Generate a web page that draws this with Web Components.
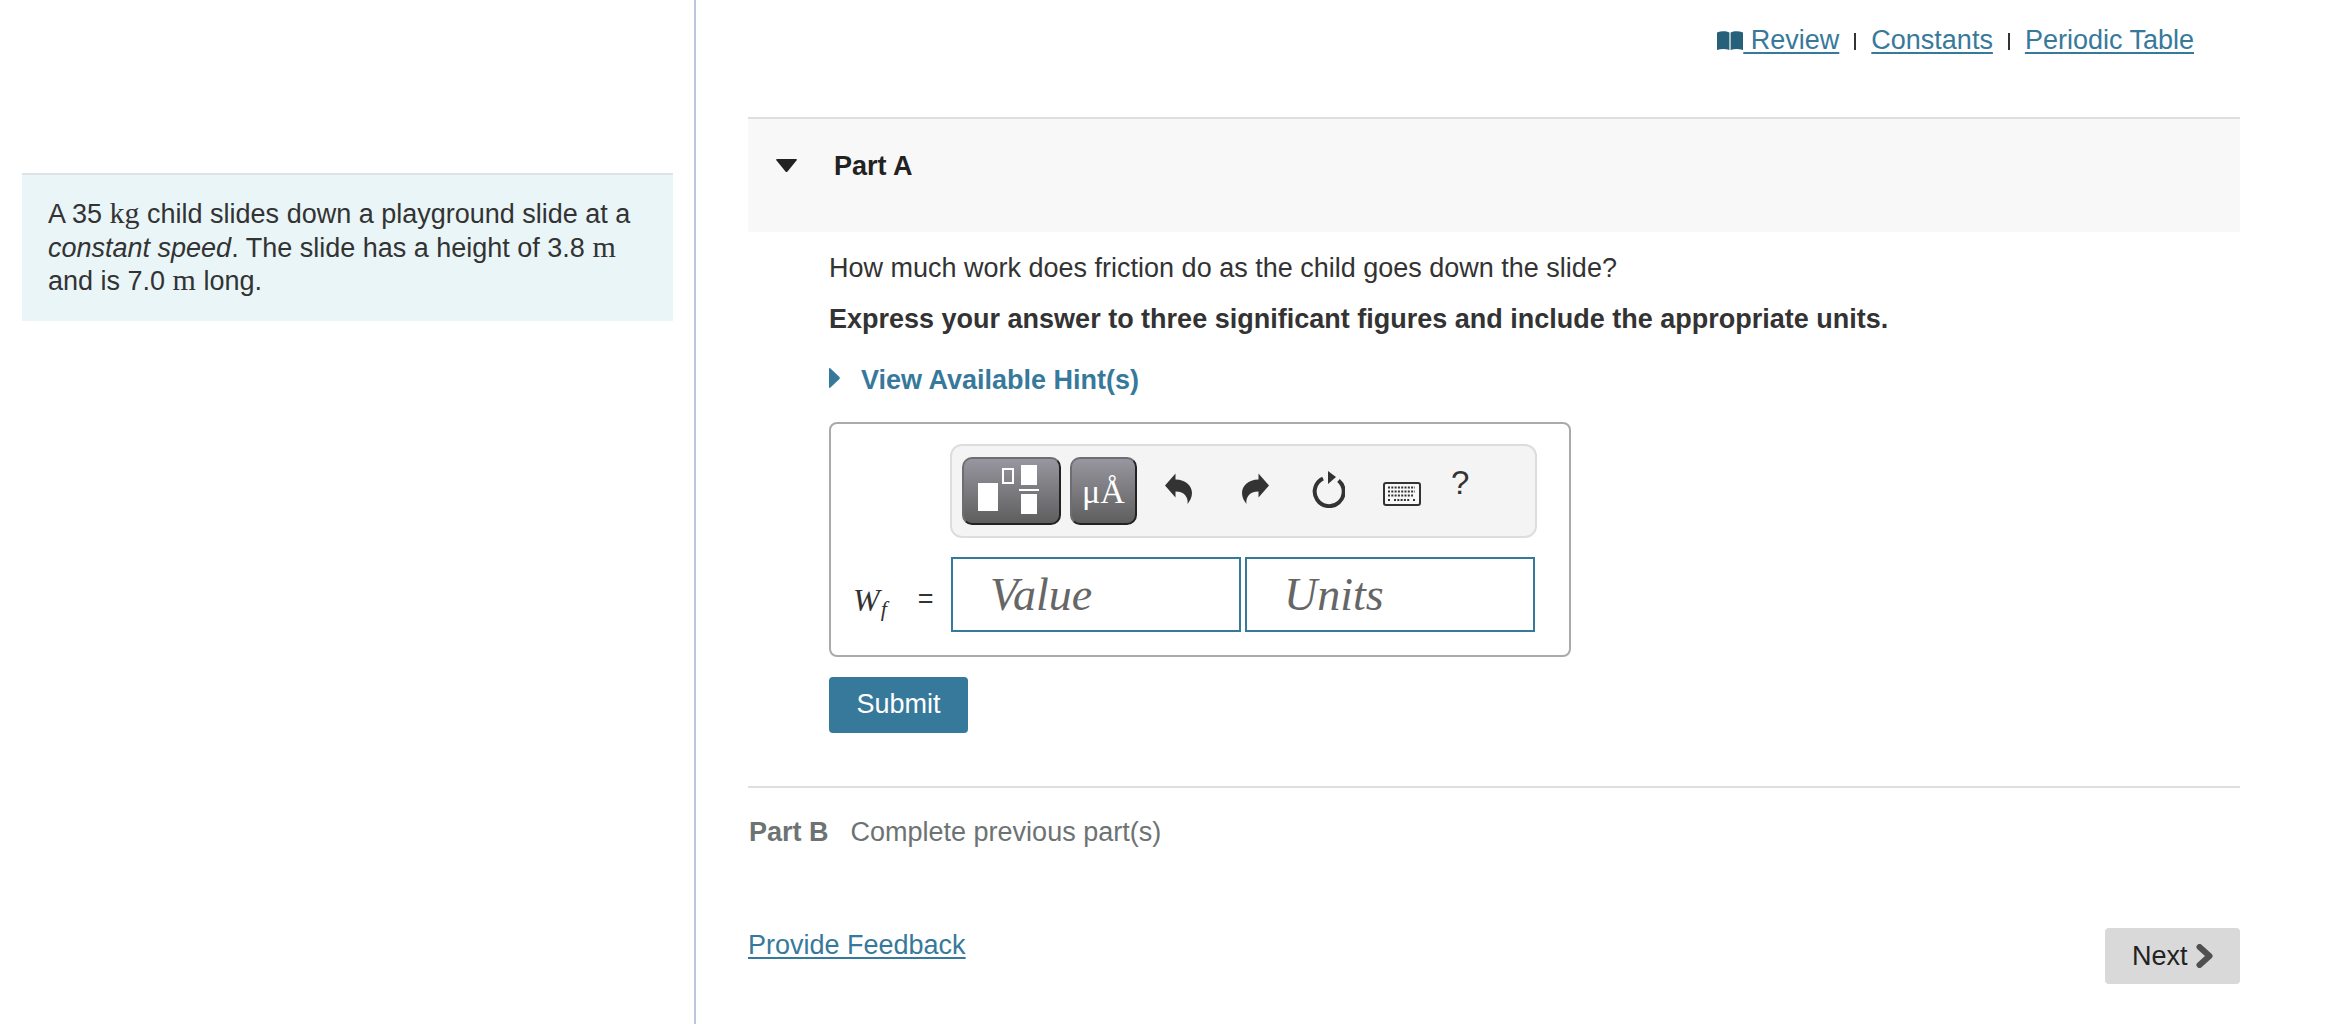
<!DOCTYPE html>
<html lang="en"><head><meta charset="utf-8"><title>Part A</title>
<style>
html,body{margin:0;padding:0;background:#fff}
body{font:27px/33px "Liberation Sans",Arial,sans-serif;color:#333;overflow:hidden}
</style></head><body>
<mp-app>
  <mp-context slot="left">A 35 <mp-math>kg</mp-math> child slides down a playground slide at a <em>constant speed</em>. The slide has a height of 3.8 <mp-math>m</mp-math> and is 7.0 <mp-math>m</mp-math> long.</mp-context>
  <mp-links slot="right"></mp-links>
  <mp-part-open slot="right" title-text="Part A">
    <p style="margin:0">How much work does friction do as the child goes down the slide?</p>
    <p style="margin:18px 0 0;font-weight:700">Express your answer to three significant figures and include the appropriate units.</p>
    <mp-hint></mp-hint>
    <mp-answer></mp-answer>
    <mp-button>Submit</mp-button>
  </mp-part-open>
  <mp-part-locked slot="right"></mp-part-locked>
  <mp-footer slot="right"></mp-footer>
</mp-app>
<script>
const def=(name,html,init)=>customElements.define(name,class extends HTMLElement{
  constructor(){super();this.attachShadow({mode:'open'}).innerHTML=html;}
  connectedCallback(){if(init)init(this)}
});
def('mp-app',`<style>
:host{display:flex;width:2332px;height:1024px;box-sizing:border-box}
.l{width:696px;height:100%;box-sizing:border-box;border-right:2px solid #b9c7de;padding:173px 24px 0 22px;flex:none}
.r{flex:1;min-width:0;padding:0 92px 0 52px}
</style><div class="l"><slot name="left"></slot></div><div class="r"><slot name="right"></slot></div>`);
def('mp-context',`<style>
:host{display:block;background:#e9f5f7;border-top:2px solid #dfe3e5;padding:22px 26px 0;height:148px;box-sizing:border-box;color:#333;width:651px;line-height:32.5px}
::slotted(em){font-style:italic}
</style><slot></slot>`);
def('mp-math',`<style>:host{font-family:"Liberation Serif","Times New Roman",serif;font-size:30px;color:#333}</style><slot></slot>`);
def('mp-links',`<style>
:host{display:flex;justify-content:flex-end;align-items:flex-start;height:117px;padding:24px 46px 0 0;box-sizing:border-box;color:#333}
a{color:#37799b;text-decoration:underline;text-underline-offset:3px;text-decoration-thickness:2px}
svg{display:block;margin:7px 0 0}
.s{margin:0 15px}
.sep{width:2px;height:17px;background:#333;margin:9px 15px 0}
</style>
<svg width="26" height="19" viewBox="0 0 26 19"><path d="M0 1.5C4-.3 9-.3 12.4 1.5V19C9 17.6 4 17.6 0 19Z M13.6 1.5C17-.3 22-.3 26 1.5V19C22 17.6 17 17.6 13.6 19Z" fill="#27607a"/></svg>
<a href="#">&nbsp;Review</a><span class="sep"></span><a href="#">Constants</a><span class="sep"></span><a href="#">Periodic Table</a>`);
def('mp-part-open',`<style>
:host{display:block}
.bar{background:#f8f8f8;border-top:2px solid #dedede;height:115px;box-sizing:border-box;padding:31px 0 0 28px;display:flex;align-items:flex-start;font-weight:700;color:#222}
svg{display:block;margin:9px 37px 0 0;flex:none}
.body{padding:20px 0 0 81px}
</style>
<div class="bar"><svg width="21" height="13" viewBox="0 0 21 13"><path d="M.5 0H20.5Q21 .5 20.5 1.5L11.5 12.5Q10.5 13.5 9.500 12.500L.5 1.500Q0 .5.5 0Z" fill="#222"/></svg><span id="t"></span></div>
<div class="body"><slot></slot></div>`,el=>{el.shadowRoot.getElementById('t').textContent=el.getAttribute('title-text')});
def('mp-hint',`<style>
:host{display:flex;align-items:flex-start;margin-top:28px;color:#37799b;font-weight:700}
svg{display:block;margin:4px 21px 0 0;flex:none}
</style><svg width="11" height="20" viewBox="0 0 11 20"><path d="M0 1Q0-.5 1.500.5L10.500 9Q11 10 10.500 11L1.500 19.500Q0 20.500 0 19Z" fill="#37799b"/></svg><span>View Available Hint(s)</span>`);
def('mp-answer',`<style>
:host{display:block;box-sizing:border-box;width:742px;height:235px;margin-top:25px;border:2px solid #aaa;border-radius:8px;padding:20px 0 0 119px;position:relative}
.row{display:flex;margin:19px 0 0 -119px;height:75px}
.lab{width:120px;box-sizing:border-box;padding:27px 0 0 22px;font:italic 32px/33px "Liberation Serif","Times New Roman",serif;color:#333;display:flex;flex:none}
.lab sub{font-size:22px;line-height:22px;margin:14px 0 0 1px;display:block}
.eq{font:27px/33px "Liberation Sans",Arial,sans-serif;margin:-1px 0 0 31px;font-style:normal}
.f{box-sizing:border-box;width:290px;height:75px;border:2px solid #37799b;font:italic 46px/71px "Liberation Serif","Times New Roman",serif;color:#666;padding-left:37px;flex:none}
.f+.f{margin-left:4px}
</style>
<mp-toolbar></mp-toolbar>
<div class="row"><div class="lab"><span>W</span><sub>f</sub><span class="eq">=</span></div><div class="f">Value</div><div class="f">Units</div></div>`);
def('mp-toolbar',`<style>
:host{display:flex;box-sizing:border-box;width:587px;height:94px;background:#f4f4f4;border:2px solid #ddd;border-radius:12px;padding:11px 0 0 10px;align-items:flex-start;color:#333}
.b{box-sizing:border-box;height:68px;border-radius:10px;border:2px solid #6e6e72;border-right-color:#222;border-bottom-color:#222;background:linear-gradient(#98969f,#5e5e5e);flex:none}
.t{width:99px;padding:0}
.t svg{display:block}
.m{width:67px;margin-left:9px;color:#fff;font:34px/62px "Liberation Serif","Times New Roman",serif;text-align:center;padding-top:2px}
svg.i{display:block;flex:none}
.q{font:33px/40px "Liberation Sans",Arial,sans-serif;margin:6px 0 0 30px;color:#333}
</style>
<div class="b t"><svg width="95" height="64" viewBox="0 0 95 64"><rect x="14" y="24" width="20" height="28" fill="#fff"/><rect x="39" y="10" width="10" height="14" fill="none" stroke="#fff" stroke-width="2"/><rect x="57" y="6" width="16" height="20" fill="#fff"/><rect x="55" y="30" width="20" height="2" fill="#fff"/><rect x="57" y="35" width="16" height="20" fill="#fff"/></svg></div>
<div class="b m">μÅ</div>
<svg class="i" style="margin:16px 0 0 28px" width="27" height="31" viewBox="0 0 27 31"><path d="M0 12.500 10.500.5V6.500C21 6.500 27 13 27 20 27 24 25 28 22.500 31 23.500 25 20 18.500 10.500 18.500V24.500Z" fill="#333"/></svg>
<svg class="i" style="margin:16px 0 0 50px" width="27" height="31" viewBox="0 0 27 31"><path d="M27 12.500 16.500.5V6.500C6 6.500 0 13 0 20 0 24 2 28 4.500 31 3.500 25 7 18.500 16.500 18.500V24.500Z" fill="#333"/></svg>
<svg class="i" style="margin:14px 0 0 43px" width="33" height="37" viewBox="0 0 33 37"><path d="M11 7.500A14.500 14.500 0 1 0 26.500 9.500" fill="none" stroke="#333" stroke-width="4"/><path d="M16 0 24 6 16 13Z" fill="#333"/></svg>
<svg class="i" style="margin:25px 0 0 38px" width="38" height="24" viewBox="0 0 38 24"><rect x="1" y="1" width="36" height="22" rx="2" fill="#f8f8f8" stroke="#333" stroke-width="2"/><path d="M5 5.500h27M5 9.500h27M5 13.500h25M5 18h3m3 0h16m3 0h3" fill="none" stroke="#333" stroke-width="2" stroke-dasharray="2 1.300"/></svg>
<span class="q">?</span>`);
def('mp-button',`<style>
:host{display:block;box-sizing:border-box;width:139px;height:56px;margin-top:20px;background:#37799b;border-radius:4px;color:#fff;text-align:center;line-height:54px}
</style><slot></slot>`);
def('mp-part-locked',`<style>
:host{display:flex;box-sizing:border-box;border-top:2px solid #dedede;margin-top:53px;padding-top:28px;height:142px;color:#6d7373}
b{font-weight:700;margin-right:22px;padding-left:1px}
</style><b>Part B</b><span>Complete previous part(s)</span>`);
def('mp-footer',`<style>
:host{display:flex;justify-content:space-between;align-items:flex-start}
a{color:#37799b;text-decoration:underline;text-underline-offset:3px;text-decoration-thickness:2px;margin-top:1px}
.n{box-sizing:border-box;width:135px;height:56px;background:#d9d9d9;border-radius:4px;color:#222;display:flex;align-items:center;padding-left:27px;gap:8px}
svg{display:block}
</style><a href="#">Provide Feedback</a><div class="n"><span>Next</span><svg width="17" height="24" viewBox="0 0 17 24"><path d="M3.500 3 13.500 12 3.500 21" fill="none" stroke="#505050" stroke-width="6" stroke-linecap="round" stroke-linejoin="round"/></svg></div>`);
</script>
</body></html>
